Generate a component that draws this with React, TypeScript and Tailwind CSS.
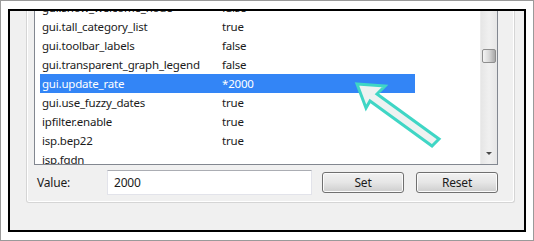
const rows = [
  { name: "gui.show_welcome_node", value: "false" },
  { name: "gui.tall_category_list", value: "true" },
  { name: "gui.toolbar_labels", value: "false" },
  { name: "gui.transparent_graph_legend", value: "false" },
  { name: "gui.update_rate", value: "*2000", selected: true },
  { name: "gui.use_fuzzy_dates", value: "true" },
  { name: "ipfilter.enable", value: "true" },
  { name: "isp.bep22", value: "true" },
  { name: "isp.fqdn", value: "" },
];

export default function App() {
  return (
    <div
      className="w-[534px] h-[241px] bg-white border border-[#9a9a9a] pt-[8px] pl-[7px] overflow-hidden relative"
      style={{ fontFamily: '"Noto Sans", "Open Sans", sans-serif' }}
    >
      <div className="w-[518px] h-[223px] border-2 border-black bg-[#f0f0f0] flex flex-col overflow-hidden text-[11.5px] tracking-[-0.2px] text-[#1b1b1b]">
        {/* group box, top edge is cut off */}
        <div className="ml-[16px] mr-[9px] h-[192px] border-x border-b border-[#d5d5d5] rounded-b-[3px] shadow-[inset_1px_0_0_#fff,inset_-1px_-1px_0_#fff] flex flex-col">
          <div className="ml-[7px] mr-[16px] h-[154px] bg-white border-x border-b border-[#828790] flex overflow-hidden">
            <div className="flex-1 pl-[5px] -mt-[13px]">
              {rows.map((r) => (
                <div
                  key={r.name}
                  className={
                    r.selected
                      ? "w-[375px] h-[19px] flex items-center bg-[#3385f6] text-white"
                      : "w-[375px] h-[19px] flex items-center"
                  }
                >
                  <span className="w-[182px] pl-[2px] whitespace-nowrap">{r.name}</span>
                  <span>{r.value}</span>
                </div>
              ))}
            </div>
            <div className="w-[17px] bg-gradient-to-r from-[#e6e6e6] via-[#f0f0f0] to-[#e6e6e6] border-l border-[#ececec] flex flex-col items-center">
              <div className="mt-[38px] w-[14px] h-[14px] rounded-[2px] border border-[#8e8e8e] bg-gradient-to-r from-[#f4f4f4] via-[#d8d8d8] to-[#a8a8a8]" />
              <div className="mt-auto mb-[9px] w-0 h-0 border-x-[3px] border-x-transparent border-t-[3px] border-t-[#4a4a4a]" />
            </div>
          </div>
          <div className="flex items-center mt-[5px] ml-[10px] text-[12px]">
            <span className="w-[70px]">Value:</span>
            <div className="w-[205px] h-[25px] bg-white border border-[#e2e3ea] border-t-[#abadb3] flex items-center pl-[6px]">
              2000
            </div>
            <button className="ml-[10px] w-[82px] h-[21px] rounded-[3px] border border-[#707070] bg-gradient-to-b from-[#f2f2f2] via-[#e6e6e6] to-[#cdcdcd] shadow-[inset_0_0_0_1px_#fbfbfb]">
              Set
            </button>
            <button className="ml-[12px] w-[82px] h-[21px] rounded-[3px] border border-[#707070] bg-gradient-to-b from-[#f2f2f2] via-[#e6e6e6] to-[#cdcdcd] shadow-[inset_0_0_0_1px_#fbfbfb]">
              Reset
            </button>
          </div>
        </div>
      </div>
      {/* annotation arrow */}
      <svg className="absolute left-0 top-0 pointer-events-none" width="534" height="241">
        <polygon
          points="356,83 384,85 376,93 438,138 431,145 369,100 365,107"
          fill="#eef2f1"
          stroke="#3fd6c5"
          strokeWidth="3"
          strokeLinejoin="miter"
        />
      </svg>
    </div>
  );
}
